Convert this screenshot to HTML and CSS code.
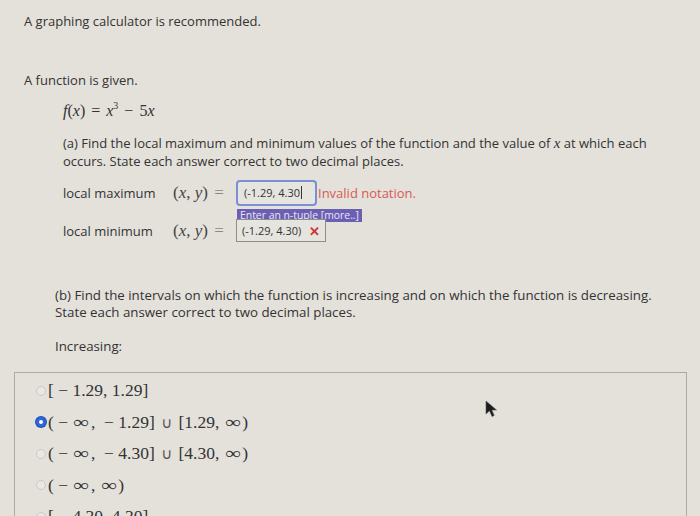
FILE: index.html
```html
<!DOCTYPE html>
<html lang="en">
<head>
<meta charset="utf-8">
<title>Question</title>
<link rel="stylesheet" href="styles.css">
</head>
<body>
<div class="page">
  <p class="rec">A graphing calculator is recommended.</p>
  <p class="given">A function is given.</p>
  <div class="formula math"><i>f</i>(<i>x</i>) <span class="op">=</span> <i>x</i><sup>3</sup> <span class="op">−</span> 5<i>x</i></div>

  <div class="part-a">
    <p class="prompt">(a) Find the local maximum and minimum values of the function and the value of <i class="math">x</i> at which each occurs. State each answer correct to two decimal places.</p>
    <div class="answers">
      <div class="row">
        <span class="label">local maximum</span>
        <span class="math eq">(<i>x</i>, <i>y</i>) <span class="op">=</span></span>
        <span class="field active">(-1.29, 4.30<span class="caret"></span></span>
        <span class="invalid">Invalid notation.</span>
      </div>
      <div class="tip-row"><span class="tip">Enter an n-tuple [more..]</span></div>
      <div class="row">
        <span class="label">local minimum</span>
        <span class="math eq">(<i>x</i>, <i>y</i>) <span class="op">=</span></span>
        <span class="field">(-1.29, 4.30) <span class="cross">✕</span></span>
      </div>
    </div>
  </div>

  <div class="part-b">
    <p class="prompt">(b) Find the intervals on which the function is increasing and on which the function is decreasing. State each answer correct to two decimal places.</p>
    <p class="inc">Increasing:</p>
  </div>

  <div class="choices">
    <div class="choice"><span class="radio"></span><span class="math">[ − 1.29, 1.29]</span></div>
    <div class="choice"><span class="radio on"></span><span class="math">( − <span class="inf">∞</span>, &nbsp;− 1.29] <span class="cup">∪</span> [1.29, <span class="inf">∞</span>)</span></div>
    <div class="choice"><span class="radio"></span><span class="math">( − <span class="inf">∞</span>, &nbsp;− 4.30] <span class="cup">∪</span> [4.30, <span class="inf">∞</span>)</span></div>
    <div class="choice"><span class="radio"></span><span class="math">( − <span class="inf">∞</span>, <span class="inf">∞</span>)</span></div>
    <div class="choice"><span class="radio"></span><span class="math">[ − 4.30, 4.30]</span></div>
    <svg class="cursor" width="14" height="18" viewBox="0 0 14 18"><path d="M1 1 L1 14 L4.5 10.8 L7 16.5 L9.2 15.5 L6.8 10 L11.5 10 Z" fill="#1c1c1c" stroke="#555" stroke-width="0.6"/></svg>
  </div>
</div>
</body>
</html>
```

FILE: styles.css
```css
html, body {
  margin: 0;
  padding: 0;
  background: #e4e1db;
  height: 516px;
  overflow: hidden;
}

body {
  font-family: "Open Sans", "Noto Sans", sans-serif;
  color: #333333;
  font-size: 13px;
}

p {
  margin: 0;
}

.page {
  padding-top: 12px;
}

.math {
  font-family: "Liberation Serif", "DejaVu Serif", serif;
}

.math i {
  font-style: italic;
}

.rec {
  margin-left: 24px;
  line-height: 18px;
}

.given {
  margin: 41px 0 0 24px;
  line-height: 18px;
}

.formula {
  margin: 12px 0 0 63px;
  font-size: 16px;
  line-height: 20px;
}

.formula sup {
  font-size: 10px;
  vertical-align: 7px;
  line-height: 0;
}

.op {
  padding: 0 2px;
}

.part-a {
  margin: 13px 0 0 63px;
  width: 600px;
}

.part-a .prompt {
  line-height: 18px;
}

.prompt .math {
  font-size: 15px;
}

.answers {
  margin-top: 10px;
  display: flex;
  flex-direction: column;
}

.row {
  display: flex;
  align-items: center;
  height: 25px;
}

.label {
  width: 110px;
}

.eq {
  font-size: 17px;
  width: 63px;
  color: #444;
}

.eq .op {
  color: #888;
}

.field {
  display: inline-flex;
  align-items: center;
  height: 23px;
  box-sizing: border-box;
  border: 1px solid #8d8d8d;
  padding: 0 5px;
  font-size: 11px;
  background: #e6e4df;
  color: #333;
}

.field.active {
  width: 81px;
  height: 26px;
  border: 2px solid #7b8fd6;
  border-radius: 4px;
  padding-left: 6px;
}

.caret {
  display: inline-block;
  width: 1px;
  height: 13px;
  background: #333;
  margin-left: 1px;
}

.invalid {
  color: #d65a55;
  font-size: 13px;
  margin-left: 1px;
}

.tip-row {
  padding-left: 174px;
  height: 13px;
}

.tip {
  display: inline-block;
  background: #6c5fb3;
  color: #e8e6f5;
  font-size: 10.4px;
  line-height: 13px;
  padding: 0 3px;
}

.cross {
  color: #c8363a;
  font-size: 13px;
  font-weight: bold;
  margin-left: 8px;
}

.part-b {
  margin: 44px 0 0 55px;
  width: 600px;
  font-size: 13.3px;
}

.part-b .prompt {
  line-height: 17px;
}

.inc {
  margin-top: 16px;
  line-height: 18px;
}

.choices {
  position: relative;
  margin: 17px 13px 0 14px;
  border: 1px solid #a9aba6;
  border-bottom: none;
  height: 200px;
  padding: 2px 0 0 21px;
  box-sizing: border-box;
}

.choice {
  display: flex;
  align-items: center;
  height: 31.5px;
  font-size: 17.5px;
  color: #333;
}

.radio {
  width: 8px;
  height: 8px;
  border-radius: 50%;
  border: 1px solid #c9c9c6;
  background: #e9e7e3;
  margin-right: 2px;
  flex: none;
}

.radio.on {
  width: 4px;
  height: 4px;
  border: 3px solid #2e66d9;
  background: #ffffff;
  box-shadow: 0 0 0 1px #1d4fb8;
}

.inf {
  display: inline-block;
  transform: scaleX(1.25);
  margin: 0 3px;
}

.cup {
  font-family: "DejaVu Sans", sans-serif;
  font-size: 15px;
  color: #555;
  padding: 0 2px;
}

.cursor {
  position: absolute;
  left: 470px;
  top: 27px;
}
```
